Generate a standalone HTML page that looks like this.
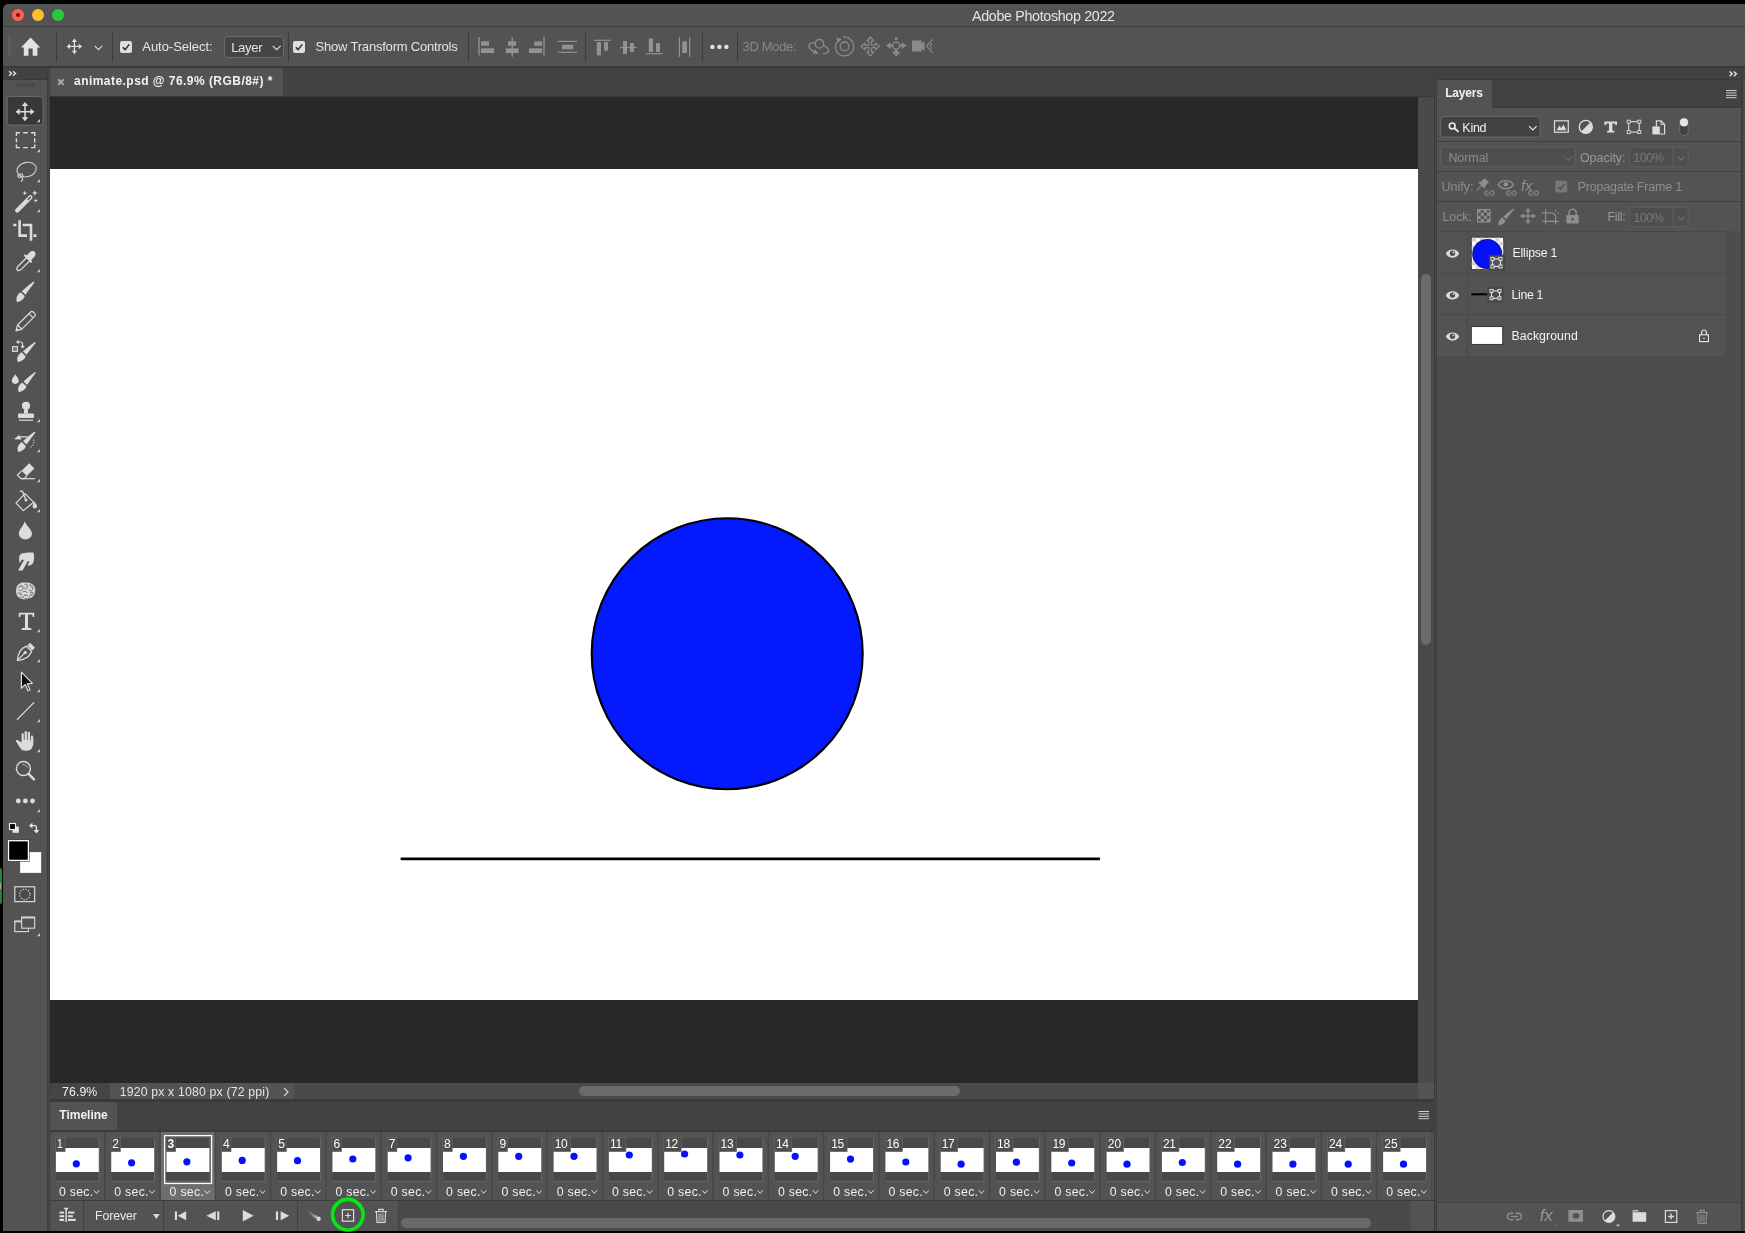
<!DOCTYPE html>
<html lang="en">
<head>
<meta charset="utf-8">
<title>Adobe Photoshop 2022</title>
<style>
*{box-sizing:border-box;margin:0;padding:0}
html,body{width:1745px;height:1233px;overflow:hidden;background:#000}
body{position:relative;font-family:"Liberation Sans",sans-serif;font-size:12px;color:#dcdcdc;-webkit-font-smoothing:antialiased}
.a{position:absolute}
.t{position:absolute;white-space:nowrap;line-height:1;transform-origin:0 0}
svg{position:absolute;overflow:visible}
#win{position:absolute;left:3px;top:4px;width:1742px;height:1227px;background:#535353;border-top-left-radius:5px;overflow:hidden}
</style>
</head>
<body>
<div id="win"></div>
<div id="ui" style="position:absolute;left:0;top:0;width:1745px;height:1233px;will-change:transform">
<!-- layout -->
<div class="a" style="left:3px;top:26px;width:1742px;height:1px;background:#3e3e3e;"></div>
<div class="a" style="left:3px;top:66.4px;width:1742px;height:1.5px;background:#3a3a3a;"></div>
<div class="a" style="left:3px;top:68px;width:44px;height:11px;background:#424242;"></div>
<div class="a" style="left:3px;top:79px;width:44px;height:1px;background:#3a3a3a;"></div>
<div class="a" style="left:47px;top:68px;width:3px;height:1163px;background:#3c3c3c;"></div>
<div class="a" style="left:48px;top:68px;width:1px;height:1163px;background:#484848;"></div>
<div class="a" style="left:50px;top:68px;width:1384px;height:28px;background:#424242;"></div>
<div class="a" style="left:50px;top:68px;width:233px;height:28px;background:#535353;"></div>
<div class="a" style="left:50px;top:96px;width:1384px;height:1px;background:#383838;"></div>
<div class="a" style="left:50px;top:97px;width:1368px;height:986px;background:#282828;"></div>
<div class="a" style="left:1418px;top:97px;width:16px;height:986px;background:#4a4a4a;"></div>
<div class="a" style="left:1421px;top:274px;width:10px;height:371px;background:#6b6b6b;border-radius:5px;"></div>
<div class="a" style="left:50px;top:1083px;width:1384px;height:16px;background:#4a4a4a;"></div>
<div class="a" style="left:50px;top:1083px;width:60px;height:16px;background:#454545;"></div>
<div class="a" style="left:110px;top:1083px;width:184px;height:16px;background:#535353;"></div>
<div class="a" style="left:579px;top:1086px;width:381px;height:10px;background:#6b6b6b;border-radius:5px;"></div>
<div class="a" style="left:1418px;top:1083px;width:16px;height:16px;background:#535353;"></div>
<div class="a" style="left:50px;top:1099px;width:1384px;height:3px;background:#3a3a3a;"></div>
<div class="a" style="left:1434px;top:68px;width:3px;height:1163px;background:#3c3c3c;"></div>
<div class="a" style="left:1435px;top:68px;width:1px;height:1163px;background:#484848;"></div>
<div class="a" style="left:1741px;top:68px;width:2px;height:1163px;background:#3c3c3c;"></div>
<div class="a" style="left:1743px;top:68px;width:2px;height:1163px;background:#4d4d4d;"></div>
<div class="a" style="left:1743px;top:68px;width:2px;height:12px;background:#424242;"></div>
<div class="a" style="left:0px;top:1231px;width:1745px;height:2px;background:#000;"></div>
<!-- topbar -->
<svg style="left:0px;top:0px" width="80" height="28" viewBox="0 0 80 28" ><circle cx="18" cy="15" r="6" fill="#fe5f58"/><circle cx="18" cy="15" r="2" fill="#7a0500"/><circle cx="38" cy="15" r="6" fill="#febc2e"/><circle cx="58" cy="15" r="6" fill="#28c840"/></svg>
<div class="t" style="left:972.00px;top:9.00px;font-size:14.3px;color:#e4e4e4;letter-spacing:-0.343px;">Adobe Photoshop 2022</div>
<svg style="left:0px;top:0px" width="14" height="60" viewBox="0 0 14 60" ><rect x="8" y="37" width="3" height="1" fill="#666"/><rect x="8" y="39" width="3" height="1" fill="#666"/><rect x="8" y="41" width="3" height="1" fill="#666"/><rect x="8" y="43" width="3" height="1" fill="#666"/><rect x="8" y="45" width="3" height="1" fill="#666"/><rect x="8" y="47" width="3" height="1" fill="#666"/><rect x="8" y="49" width="3" height="1" fill="#666"/><rect x="8" y="51" width="3" height="1" fill="#666"/><rect x="8" y="53" width="3" height="1" fill="#666"/><rect x="8" y="55" width="3" height="1" fill="#666"/></svg>
<svg style="left:20px;top:36px" width="22" height="22" viewBox="0 0 22 22" ><path d="M10.6 1.6 L20.2 11.6 H17.4 V19.8 H12.7 V12.6 H8.5 V19.8 H3.8 V11.6 H1 Z" fill="#e2e2e2"/></svg>
<div class="a" style="left:56px;top:32px;width:1px;height:30px;background:#3c3c3c;"></div>
<svg style="left:66px;top:38px" width="17" height="17" viewBox="0 0 17 17" ><g fill="none" stroke="#dcdcdc" stroke-width="1.3"><path d="M8.4 2 V14.8 M2 8.4 H14.8"/></g><path d="M8.4 0.6 L11 4 H5.8 Z M8.4 16.2 L11 12.8 H5.8 Z M0.6 8.4 L4 5.8 V11 Z M16.2 8.4 L12.8 5.8 V11 Z" fill="#dcdcdc"/></svg>
<svg style="left:94px;top:45px" width="9" height="6" viewBox="0 0 9 6" ><path d="M0.8 0.8 L4.5 4.6 L8.2 0.8" fill="none" stroke="#dcdcdc" stroke-width="1.2"/></svg>
<div class="a" style="left:112px;top:32px;width:1px;height:30px;background:#3c3c3c;"></div>
<svg style="left:120px;top:41px" width="12" height="12" viewBox="0 0 12 12" ><rect x="0" y="0" width="12" height="12" rx="2" fill="#dedede"/><path d="M2.8 6.2 L5.1 8.6 L9.3 3.4" fill="none" stroke="#2a2a2a" stroke-width="1.5"/></svg>
<div class="t" style="left:142.30px;top:40.00px;font-size:13px;color:#e4e4e4;letter-spacing:-0.044px;">Auto-Select:</div>
<div class="a" style="left:224px;top:36.2px;width:60px;height:21.6px;background:#454545;border:1px solid #6a6a6a;border-radius:3px;"></div>
<div class="t" style="left:231.20px;top:41.00px;font-size:13px;color:#e4e4e4;letter-spacing:-0.306px;">Layer</div>
<svg style="left:271.5px;top:44.5px" width="10" height="6" viewBox="0 0 10 6" ><path d="M0.8 0.8 L4.7 4.7 L8.6 0.8" fill="none" stroke="#dcdcdc" stroke-width="1.2"/></svg>
<div class="a" style="left:288px;top:32px;width:1px;height:30px;background:#3c3c3c;"></div>
<svg style="left:293px;top:41px" width="12" height="12" viewBox="0 0 12 12" ><rect x="0" y="0" width="12" height="12" rx="2" fill="#dedede"/><path d="M2.8 6.2 L5.1 8.6 L9.3 3.4" fill="none" stroke="#2a2a2a" stroke-width="1.5"/></svg>
<div class="t" style="left:315.60px;top:40.00px;font-size:13px;color:#e4e4e4;letter-spacing:-0.203px;">Show Transform Controls</div>
<div class="a" style="left:468px;top:32px;width:1px;height:30px;background:#3c3c3c;"></div>
<svg style="left:0;top:0" width="720" height="66" viewBox="0 0 720 66"><g fill="#929292"><rect x="478.3" y="37" width="1.4" height="18.4"/><rect x="481" y="41.3" width="8" height="4.5"/><rect x="481" y="48.3" width="13" height="4.7"/><rect x="511.5" y="37" width="1.4" height="19.8"/><rect x="508" y="41.3" width="8" height="4.5"/><rect x="505.8" y="48.3" width="12.8" height="4.7"/><rect x="543.3" y="37" width="1.4" height="18.4"/><rect x="534.2" y="41.3" width="7.8" height="4.5"/><rect x="529" y="48.3" width="13" height="4.7"/><rect x="558" y="40.8" width="19" height="1.2"/><rect x="558" y="51.7" width="19" height="1.2"/><rect x="561.9" y="44.7" width="11.3" height="4.6"/><rect x="594" y="39.7" width="17" height="1.2"/><rect x="596.8" y="42" width="4.2" height="13.4"/><rect x="604" y="42" width="4" height="8.6"/><rect x="620" y="46.9" width="16.9" height="1.2"/><rect x="623" y="41" width="4" height="13"/><rect x="630" y="43" width="4" height="9"/><rect x="646" y="53.1" width="16.8" height="1.2"/><rect x="648.8" y="38.5" width="4.2" height="13.5"/><rect x="656" y="43" width="4" height="9"/><rect x="678.8" y="37" width="1.2" height="19.8"/><rect x="689.1" y="37" width="1.2" height="19.8"/><rect x="682.2" y="41.3" width="4.8" height="11.7"/></g></svg>
<div class="a" style="left:585px;top:32px;width:1px;height:30px;background:#3c3c3c;"></div>
<div class="a" style="left:702px;top:32px;width:1px;height:30px;background:#3c3c3c;"></div>
<svg style="left:708px;top:42px" width="24" height="10" viewBox="0 0 24 10" fill="#e2e2e2"><circle cx="4.4" cy="4.9" r="2.2"/><circle cx="11.4" cy="4.9" r="2.2"/><circle cx="18.4" cy="4.9" r="2.2"/></svg>
<div class="a" style="left:737px;top:32px;width:1px;height:30px;background:#3c3c3c;"></div>
<div class="t" style="left:742.60px;top:40.00px;font-size:13px;color:#888;letter-spacing:-0.334px;">3D Mode:</div>
<svg style="left:807px;top:36px" width="24" height="22" viewBox="0 0 24 22" ><g fill="none" stroke="#8a8a8a" stroke-width="1.3"><circle cx="12.5" cy="7.8" r="4.3"/><path d="M8.3 7 C3 6 0.8 9 2.6 12 C4 14.4 6.5 15.6 9 16.2"/><path d="M16.6 9.6 C21 11 23 14.6 20.4 16.6 C19 17.7 17 17.8 15.6 17.6"/></g><path d="M5.6 17.6 L11.6 17.9 L8.4 13.4 Z" fill="#8a8a8a"/></svg>
<svg style="left:834px;top:35px" width="22" height="23" viewBox="0 0 22 23" ><g fill="none" stroke="#8a8a8a" stroke-width="1.3"><circle cx="10.6" cy="11.4" r="4.4"/><path d="M4.2 5.6 C-0.5 10.5 1.2 18 7.2 20.3 C13.5 22.6 20 17.5 19.6 11 C19.3 5.4 14.4 1.4 9 2"/></g><path d="M2.4 2.6 L7.6 4 L3.4 8.2 Z" fill="#8a8a8a"/></svg>
<svg style="left:860px;top:36px" width="21" height="21" viewBox="0 0 21 21" ><path d="M10.3 1 L13.8 5 H11.6 V9.2 H15.6 V7 L19.6 10.4 L15.6 13.9 V11.6 H11.6 V15.8 H13.8 L10.3 19.8 L6.8 15.8 H9 V11.6 H5 V13.9 L1 10.4 L5 7 V9.2 H9 V5 H6.8 Z" fill="none" stroke="#8a8a8a" stroke-width="1.2" stroke-linejoin="round"/></svg>
<svg style="left:885px;top:36px" width="23" height="22" viewBox="0 0 23 22" ><circle cx="11.2" cy="9.6" r="3.6" fill="none" stroke="#8a8a8a" stroke-width="1.3"/><circle cx="11.2" cy="2.4" r="1.5" fill="#8a8a8a"/><path d="M1 9.6 L5.6 6.2 V8.4 H7.2 V10.8 H5.6 V13 Z M21.4 9.6 L16.8 6.2 V8.4 H15.2 V10.8 H16.8 V13 Z M11.2 20.4 L6.8 15.8 H9.6 V13.8 H12.8 V15.8 H15.6 Z" fill="#8a8a8a"/></svg>
<svg style="left:911px;top:38px" width="24" height="17" viewBox="0 0 24 17" ><path d="M1 2.6 H10.6 V5.4 L13.6 3.2 V13 L10.6 10.8 V13.6 H1 Z" fill="#8a8a8a"/><path d="M21.6 1.4 L15.6 8.1 L21.6 14.8" fill="none" stroke="#8a8a8a" stroke-width="1.2"/><path d="M20.8 5.4 C19.4 7 19.4 9.2 20.8 10.8" fill="none" stroke="#8a8a8a" stroke-width="1.1"/></svg>
<!-- tools -->
<svg style="left:0;top:0" width="50" height="960" viewBox="0 0 50 960"><path d="M9 71.2 L11.6 73.5 L9 75.8 M13 71.2 L15.6 73.5 L13 75.8" fill="none" stroke="#e8e8e8" stroke-width="1.3"/><rect x="16" y="83.2" width="1" height="3.6" fill="#414141"/><rect x="18" y="83.2" width="1" height="3.6" fill="#414141"/><rect x="20" y="83.2" width="1" height="3.6" fill="#414141"/><rect x="22" y="83.2" width="1" height="3.6" fill="#414141"/><rect x="24" y="83.2" width="1" height="3.6" fill="#414141"/><rect x="26" y="83.2" width="1" height="3.6" fill="#414141"/><rect x="28" y="83.2" width="1" height="3.6" fill="#414141"/><rect x="30" y="83.2" width="1" height="3.6" fill="#414141"/><rect x="32" y="83.2" width="1" height="3.6" fill="#414141"/><rect x="34" y="83.2" width="1" height="3.6" fill="#414141"/><rect x="7.2" y="96.5" width="35.8" height="28.6" rx="3" fill="#383838" stroke="#6a6a6a" stroke-width="1"/><path d="M25 104.2 V119.2 M17.4 111.7 H32.6" stroke="#dcdcdc" stroke-width="1.5" fill="none"/><path d="M25 102 L28.3 106 H21.7 Z M25 121.3 L28.3 117.3 H21.7 Z M15.6 111.7 L19.6 108.4 V115 Z M34.4 111.7 L30.4 108.4 V115 Z" fill="#dcdcdc"/><path d="M40 119.0 V122.2 H36.8 Z" fill="#c8c8c8"/><path d="M16.4 136 V132.8 H20 M23.2 132.8 H27.8 M31 132.8 H34.7 V136 M34.7 138.3 V142.4 M34.7 144.4 V147.6 H31 M27.8 147.6 H23.2 M20 147.6 H16.4 V144.4 M16.4 142.4 V138.3" fill="none" stroke="#dcdcdc" stroke-width="1.4"/><path d="M40 149.0 V152.2 H36.8 Z" fill="#c8c8c8"/><g fill="none" stroke="#d2d2d2" stroke-width="1.1"><ellipse cx="26.6" cy="169.6" rx="9.8" ry="7.2" transform="rotate(-14 26.6 169.6)"/><ellipse cx="20.3" cy="175.6" rx="2.6" ry="1.6" transform="rotate(-14 20.3 175.6)"/><path d="M21.8 176.8 C23 178.6 22.6 180.6 21 181.8"/></g><path d="M40 179.0 V182.2 H36.8 Z" fill="#c8c8c8"/><path d="M17.2 210.4 L30.4 197.2" stroke="#dcdcdc" stroke-width="4.2" stroke-linecap="round" fill="none"/><path d="M28.2 199.5 L30.3 197.4" stroke="#535353" stroke-width="1.5" stroke-linecap="round"/><path d="M24.8 190.6 L25.5 192.4 L27.4 193.1 L25.5 193.8 L24.8 195.6 L24.1 193.8 L22.2 193.1 L24.1 192.4 Z" fill="#dcdcdc"/><path d="M34.8 190 L35.6 192.2 L37.8 193 L35.6 193.8 L34.8 196 L34 193.8 L31.8 193 L34 192.2 Z" fill="#dcdcdc"/><path d="M35.8 198.4 L36.4 200 L38 200.6 L36.4 201.2 L35.8 202.8 L35.2 201.2 L33.6 200.6 L35.2 200 Z" fill="#dcdcdc"/><path d="M40 209.0 V212.2 H36.8 Z" fill="#c8c8c8"/><path d="M13.2 225 H16.4 M19.6 220.2 V235.6 H27 M22.6 225 H31 V240.8 M33.4 235.6 H36.4" fill="none" stroke="#dcdcdc" stroke-width="2.6"/><path d="M27 257.2 L18 266.2 C16.6 267.6 16.6 269.2 17.4 270 C18.2 270.8 19.8 270.8 21.2 269.4 L30.2 260.4" fill="none" stroke="#dcdcdc" stroke-width="1.3"/><path d="M23.6 255.6 L25 254.2 L26.4 255.6 L29.6 252.4 C31 251 33.6 250.6 34.8 251.8 C36 253 35.6 255.6 34.2 257 L31 260.2 L32.4 261.6 L31 263 Z" fill="#dcdcdc"/><path d="M40 269.0 V272.2 H36.8 Z" fill="#c8c8c8"/><path d="M17.12 302.22 C15.34 298.41 16.85 295.19 20.56 292.25 L24.65 296.07 C24.61 298.17 21.26 301.45 17.12 302.22 Z" fill="#dcdcdc"/><path d="M21.85 291.31 Q28.16 285.45 33.56 281.59 L34.44 282.41 Q29.89 288.14 25.50 294.73 Z" fill="#dcdcdc"/><g fill="none" stroke="#dcdcdc" stroke-width="1.2" stroke-linejoin="round"><path d="M16 330.8 L17.6 325 L30.6 312 C31.4 311.2 32.4 311.2 33.2 312 L34.8 313.6 C35.6 314.4 35.6 315.4 34.8 316.2 L21.8 329.2 Z"/><path d="M17.6 325 L21.8 329.2 M29 313.6 L33.2 317.8"/></g><path d="M16 330.8 L16.7 328 L18.8 330.1 Z" fill="#dcdcdc"/><rect x="12.6" y="346.6" width="4.8" height="4.8" fill="#777" stroke="#dcdcdc" stroke-width="1.1"/><path d="M18 342 H20.6 C22 342 22.6 342.8 22.6 344 V346.4" fill="none" stroke="#dcdcdc" stroke-width="1.2"/><path d="M16 342 L18.6 339.8 V344.2 Z M22.6 348.6 L20.4 346 H24.8 Z" fill="#dcdcdc"/><path d="M17.88 362.04 C16.22 358.18 17.84 355.01 21.64 352.20 L25.60 356.16 C25.49 358.25 22.04 361.42 17.88 362.04 Z" fill="#dcdcdc"/><path d="M22.96 351.30 Q29.46 345.66 34.98 341.98 L35.82 342.82 Q31.10 348.40 26.50 354.84 Z" fill="#dcdcdc"/><path d="M15.2 374 C16.2 376.4 18.8 378.4 18.8 380.6 A3.5 3.3 0 0 1 11.8 380.6 C11.8 378.4 14.4 376.4 15.2 374 Z" fill="#dcdcdc"/><path d="M18.92 392.21 C17.12 388.43 18.58 385.26 22.22 382.39 L26.31 386.22 C26.29 388.29 23.01 391.50 18.92 392.21 Z" fill="#dcdcdc"/><path d="M23.48 381.48 Q29.66 375.75 34.96 371.99 L35.84 372.81 Q31.40 378.43 27.13 384.90 Z" fill="#dcdcdc"/><circle cx="26" cy="405.8" r="4.1" fill="#dcdcdc"/><path d="M24.4 408 H27.6 L28.2 413.6 H23.8 Z" fill="#dcdcdc"/><rect x="18" y="413.6" width="16" height="4.4" rx="0.8" fill="#dcdcdc"/><rect x="19" y="419.6" width="14" height="1.2" fill="#dcdcdc"/><path d="M40 419.0 V422.2 H36.8 Z" fill="#c8c8c8"/><path d="M14 439.2 L19.4 434.8 V436.2 H27.6 V437.6 H20.6 L21.4 439.6 Z" fill="#dcdcdc"/><path d="M18.32 452.01 C16.53 448.22 18.01 445.02 21.69 442.12 L25.78 445.95 C25.75 448.03 22.43 451.28 18.32 452.01 Z" fill="#dcdcdc"/><path d="M22.97 441.20 Q29.21 435.40 34.56 431.59 L35.44 432.41 Q30.95 438.08 26.62 444.61 Z" fill="#dcdcdc"/><path d="M33.6 439.6 C34.6 443 32.8 446.4 29.4 447.8" fill="none" stroke="#dcdcdc" stroke-width="1.1" stroke-dasharray="1.1 1.4"/><path d="M40 449.0 V452.2 H36.8 Z" fill="#c8c8c8"/><path d="M29.2 463.2 L34.4 468.4 L26.8 476 L21.6 470.8 Z" fill="#dcdcdc"/><path d="M21.6 470.8 L17.4 475 L21 478.6 H24.2 L26.8 476" fill="none" stroke="#dcdcdc" stroke-width="1.2" stroke-linejoin="round"/><path d="M21 478.7 H35" stroke="#dcdcdc" stroke-width="1.2"/><path d="M40 479.0 V482.2 H36.8 Z" fill="#c8c8c8"/><path d="M25 493.6 L33.6 502.2 L23.4 510.6 L16 503.2 Z" fill="none" stroke="#dcdcdc" stroke-width="1.2" stroke-linejoin="round"/><path d="M20 491.4 C21.4 490.2 22.6 491.4 23.2 493 L25.6 499.6" fill="none" stroke="#dcdcdc" stroke-width="1.3"/><circle cx="26" cy="500" r="1.5" fill="#dcdcdc"/><path d="M34.4 501.4 C35.4 503.4 37 504.6 37 506.2 A2.2 2.2 0 0 1 32.6 506.2 C32.6 504.6 33.8 503.4 34.4 501.4 Z" fill="#dcdcdc"/><path d="M40 509.00000000000006 V512.2 H36.8 Z" fill="#c8c8c8"/><path d="M24.8 521.2 C26.6 526 32 529.6 32 533.6 A6.6 6 0 0 1 18.8 533.6 C18.8 529.6 23.4 526 24.8 521.2 Z" fill="#dcdcdc"/><path d="M19.4 556 C20 553.6 24 552.4 33.4 552.6 C34.4 555.6 34.4 560.6 33 563 C31.6 565.4 29 566 27.6 565.6 L29.4 561.6 L27.8 561 L22.6 570.6 H18 L24 560 L22 559.4 L19.6 563 C19 561 19 558 19.4 556 Z" fill="#dcdcdc"/><path d="M16.2 589 C16.6 585 20 582.4 24 582.6 C27 582 31 582.6 33.4 585 C35.8 587.4 35.6 592 34.4 594.6 C33 597.6 30 599 26.6 599.2 C22.6 599.6 18.6 598.4 17 595.4 C16 593.4 16 591 16.2 589 Z" fill="#d8d8d8"/><g fill="none" stroke="#555" stroke-width="0.75"><path d="M18 588.4 C19.6 585 23.4 584.8 23.2 588 C23 590.4 20 591.2 18.6 590"/><path d="M24.4 584.4 C27 583.4 28.4 585.6 27 588 C26 589.4 24.6 589 24.6 587.6"/><path d="M29 584.8 C32 584.6 34 587.4 32.2 590 C31 591.6 29 591 29 589.4"/><path d="M17.6 593.4 C19.6 592 22 593.4 21.4 595.8 M22.8 597.8 C23.6 594.6 26.6 594 27.8 596.2 M22.4 592 C24.4 590.8 27 591.4 27.6 593.2"/><path d="M29.4 597.2 C29.2 594.6 31.8 593.4 33.6 594.6 M24.6 598.6 C26.6 598.2 28.4 598.2 30 598.6 M19.4 596.6 C20.4 597.6 21.4 598 22.4 598 M30 592.6 C31.4 592 32.8 592.2 33.8 593"/><path d="M20 586.6 C20.6 586 21.4 586 21.8 586.6 M25.6 585.8 C26 585.4 26.6 585.6 26.6 586.2 M30.2 586.6 C30.8 586.2 31.6 586.6 31.4 587.4 M19.4 594.4 C19.8 594 20.4 594.2 20.4 594.8 M25 595.6 C25.4 595.2 26 595.4 26 596 M31.2 595.6 C31.6 595.2 32.2 595.4 32.2 596"/></g><path d="M18.8 612.8 H34.2 V617 H32.8 L32.2 614.6 H28 V627.8 L31.4 628.2 V629.9 H21.6 V628.2 L25 627.8 V614.6 H20.8 L20.2 617 H18.8 Z" fill="#dcdcdc"/><path d="M40 629.0 V632.2 H36.8 Z" fill="#c8c8c8"/><path d="M17.4 660.4 C17.8 654.4 20 648.8 26.4 646.2 L31.6 651.4 C29 657.8 23.4 660 17.4 660.4 Z" fill="none" stroke="#dcdcdc" stroke-width="1.3" stroke-linejoin="round"/><path d="M17.8 660 L24.6 653.2" stroke="#dcdcdc" stroke-width="1.1"/><circle cx="25.2" cy="652.6" r="1.7" fill="#dcdcdc"/><path d="M27.4 645.6 L30 642.8 L35 647.8 L32.2 650.6 Z" fill="#dcdcdc"/><path d="M40 659.0 V662.2 H36.8 Z" fill="#c8c8c8"/><path d="M21.4 672.2 V688.2 L25.2 684.6 L28 690.8 L30 689.9 L27.2 683.8 L32.4 683.4 Z" fill="#111" stroke="#dcdcdc" stroke-width="1.2" stroke-linejoin="round"/><path d="M40 689.0 V692.2 H36.8 Z" fill="#c8c8c8"/><path d="M17.4 719.4 L33.8 702.6" stroke="#dcdcdc" stroke-width="1.3" stroke-linecap="round"/><path d="M40 719.0 V722.2 H36.8 Z" fill="#c8c8c8"/><path d="M21.6 742.6 V734.4 C21.6 732.8 23.8 732.8 23.8 734.4 V740 H24.6 V732.2 C24.6 730.6 26.9 730.6 26.9 732.2 V740 H27.7 V733 C27.7 731.4 30 731.4 30 733 V740.6 H30.8 V736.6 C30.8 735 33 735 33 736.6 L33.2 737.6 C33.6 742.6 33.6 746 31.4 749 C30 751 22.6 751.4 21.4 749.6 C19 746 17 743 16 741.6 C15.4 740.2 17.2 739.4 18.2 740.4 Z" fill="#dcdcdc"/><path d="M40 749.0 V752.2 H36.8 Z" fill="#c8c8c8"/><circle cx="23.4" cy="768.5" r="7" fill="none" stroke="#dcdcdc" stroke-width="1.4"/><path d="M22.4 764.6 C24.8 764.4 26.8 765.6 27.4 767.6" fill="none" stroke="#bbb" stroke-width="0.9"/><path d="M28.6 773.8 L34 779.4" stroke="#dcdcdc" stroke-width="2.4" stroke-linecap="round"/><circle cx="18.3" cy="801" r="2.4" fill="#dcdcdc"/><circle cx="25.4" cy="801" r="2.4" fill="#dcdcdc"/><circle cx="32.5" cy="801" r="2.4" fill="#dcdcdc"/><path d="M40 809.0 V812.2 H36.8 Z" fill="#c8c8c8"/><rect x="12.6" y="826.6" width="6.2" height="6.2" fill="#e6e6e6"/><rect x="9.5" y="823.5" width="6" height="6" fill="#0a0a0a" stroke="#f0f0f0" stroke-width="1.1"/><path d="M31 825.6 H35 C36 825.6 36.4 826 36.4 827 V830.4" fill="none" stroke="#e6e6e6" stroke-width="1.3"/><path d="M29 825.6 L32.4 822.8 V828.4 Z M36.4 833.4 L33.6 830 H39.2 Z" fill="#e6e6e6"/><rect x="19.8" y="851.8" width="21.8" height="21.4" fill="#fff" stroke="#3a3a3a" stroke-width="0.6"/><rect x="7.3" y="839.5" width="22.3" height="22.1" fill="#3a3a3a"/><rect x="8.5" y="840.7" width="19.9" height="19.7" fill="#000" stroke="#fff" stroke-width="1.3"/><rect x="14.8" y="886.8" width="19.8" height="14.8" fill="#4a4a4a" stroke="#d0d0d0" stroke-width="1.3"/><circle cx="24.8" cy="894.4" r="5.2" fill="none" stroke="#e0e0e0" stroke-width="1.1" stroke-dasharray="1.3 1.42"/><rect x="14.8" y="921.6" width="13.6" height="10" fill="#535353" stroke="#d0d0d0" stroke-width="1.2"/><rect x="14.2" y="920.4" width="14.8" height="1.8" fill="#d0d0d0"/><rect x="21.6" y="917.6" width="13" height="10.6" fill="#535353" stroke="#d0d0d0" stroke-width="1.2"/><rect x="21" y="916.4" width="14.2" height="2" fill="#d0d0d0"/><path d="M40 933.0 V936.2 H36.8 Z" fill="#c8c8c8"/></svg>
<div class="a" style="left:0px;top:868px;width:2px;height:36px;background:#2b8238;border-radius:0 2px 2px 0;"></div>
<div class="a" style="left:0px;top:883px;width:1px;height:6px;background:#a8a8a8;"></div>
<!-- canvas -->
<div class="a" style="left:50px;top:169px;width:1368px;height:831px;background:#fff;"></div>
<svg class="a" style="left:50px;top:169px" width="1368" height="831" viewBox="50 169 1368 831"><circle cx="727.2" cy="653.7" r="135.5" fill="#0419fd" stroke="#000" stroke-width="2.1"/><rect x="400.6" y="857.4" width="699.4" height="2.9" rx="0.8" fill="#000"/></svg>
<svg style="left:57px;top:78px" width="8" height="8" viewBox="0 0 8 8"><path d="M1.2 1.4 L6.6 6.8 M6.6 1.4 L1.2 6.8" stroke="#b4b4b4" stroke-width="1.7"/></svg>
<div class="t" style="left:74.00px;top:75.00px;font-size:12px;font-weight:700;color:#f2f2f2;letter-spacing:0.457px;">animate.psd @ 76.9% (RGB/8#) *</div>
<div class="t" style="left:62.00px;top:1086.00px;font-size:12.3px;color:#f0f0f0;letter-spacing:0.105px;">76.9%</div>
<div class="t" style="left:119.70px;top:1086.00px;font-size:12.3px;color:#e4e4e4;letter-spacing:0.157px;">1920 px x 1080 px (72 ppi)</div>
<svg style="left:282px;top:1086px" width="8" height="12" viewBox="0 0 8 12"><path d="M2 1.8 L6 6 L2 10.2" fill="none" stroke="#dcdcdc" stroke-width="1.1"/></svg>
<!-- timeline -->
<div class="a" style="left:50px;top:1102px;width:1384px;height:28px;background:#424242;"></div>
<div class="a" style="left:50px;top:1102px;width:67px;height:28px;background:#535353;"></div>
<div class="a" style="left:50px;top:1130px;width:1384px;height:1.5px;background:#3c3c3c;"></div>
<div class="t" style="left:59.30px;top:1109.00px;font-size:12px;font-weight:700;color:#f0f0f0;letter-spacing:-0.009px;">Timeline</div>
<svg style="left:1418px;top:1110px" width="12" height="10" viewBox="0 0 12 10"><path d="M0.6 1.5 H11 M0.6 3.9 H11 M0.6 6.3 H11 M0.6 8.7 H11" stroke="#d0d0d0" stroke-width="1"/></svg>
<div class="a" style="left:50px;top:1131.5px;width:1384px;height:68.5px;background:#535353;"></div>
<div class="a" style="left:161px;top:1132px;width:54.2px;height:68px;background:#6e6e6e;"></div>
<svg style="left:0;top:0" width="1440" height="1233" viewBox="0 0 1440 1233"><rect x="104.0" y="1132" width="1.4" height="68" fill="#474747"/><rect x="55.2" y="1137.3" width="44.3" height="44.2" fill="#484848"/><path d="M99.2 1137.6 V1181.3 H55.6" fill="none" stroke="#6c6c6c" stroke-width="0.9"/><path d="M55.5 1181 V1137.6 H98.9" fill="none" stroke="#5c5c5c" stroke-width="0.6"/><rect x="55.9" y="1148" width="42.9" height="24" fill="#fff"/><rect x="55.5" y="1137.6" width="9.6" height="14" fill="#4e4e4e" stroke="#666" stroke-width="0.7"/><circle cx="76.3" cy="1163.8" r="3.6" fill="#0710fb"/><path d="M93.9 1190.3 L96.6 1193.4 L99.3 1190.3" fill="none" stroke="#e0e0e0" stroke-width="1"/><rect x="159.3" y="1132" width="1.4" height="68" fill="#474747"/><rect x="110.5" y="1137.3" width="44.3" height="44.2" fill="#484848"/><path d="M154.5 1137.6 V1181.3 H110.9" fill="none" stroke="#6c6c6c" stroke-width="0.9"/><path d="M110.8 1181 V1137.6 H154.2" fill="none" stroke="#5c5c5c" stroke-width="0.6"/><rect x="111.2" y="1148" width="42.9" height="24" fill="#fff"/><rect x="110.8" y="1137.6" width="9.6" height="14" fill="#4e4e4e" stroke="#666" stroke-width="0.7"/><circle cx="131.6" cy="1162.8" r="3.6" fill="#0710fb"/><path d="M149.2 1190.3 L151.9 1193.4 L154.6 1190.3" fill="none" stroke="#e0e0e0" stroke-width="1"/><rect x="214.6" y="1132" width="1.4" height="68" fill="#474747"/><rect x="165.8" y="1137.3" width="44.3" height="44.2" fill="#484848"/><path d="M209.8 1137.6 V1181.3 H166.2" fill="none" stroke="#6c6c6c" stroke-width="0.9"/><path d="M166.1 1181 V1137.6 H209.5" fill="none" stroke="#5c5c5c" stroke-width="0.6"/><rect x="166.5" y="1148" width="42.9" height="24" fill="#fff"/><rect x="166.1" y="1137.6" width="9.6" height="14" fill="#4e4e4e" stroke="#666" stroke-width="0.7"/><circle cx="186.9" cy="1161.8" r="3.6" fill="#0710fb"/><path d="M204.5 1190.3 L207.2 1193.4 L209.9 1190.3" fill="none" stroke="#e0e0e0" stroke-width="1"/><rect x="269.9" y="1132" width="1.4" height="68" fill="#474747"/><rect x="221.1" y="1137.3" width="44.3" height="44.2" fill="#484848"/><path d="M265.1 1137.6 V1181.3 H221.5" fill="none" stroke="#6c6c6c" stroke-width="0.9"/><path d="M221.4 1181 V1137.6 H264.8" fill="none" stroke="#5c5c5c" stroke-width="0.6"/><rect x="221.8" y="1148" width="42.9" height="24" fill="#fff"/><rect x="221.4" y="1137.6" width="9.6" height="14" fill="#4e4e4e" stroke="#666" stroke-width="0.7"/><circle cx="242.2" cy="1160.4" r="3.6" fill="#0710fb"/><path d="M259.8 1190.3 L262.5 1193.4 L265.2 1190.3" fill="none" stroke="#e0e0e0" stroke-width="1"/><rect x="325.2" y="1132" width="1.4" height="68" fill="#474747"/><rect x="276.4" y="1137.3" width="44.3" height="44.2" fill="#484848"/><path d="M320.4 1137.6 V1181.3 H276.8" fill="none" stroke="#6c6c6c" stroke-width="0.9"/><path d="M276.7 1181 V1137.6 H320.1" fill="none" stroke="#5c5c5c" stroke-width="0.6"/><rect x="277.1" y="1148" width="42.9" height="24" fill="#fff"/><rect x="276.7" y="1137.6" width="9.6" height="14" fill="#4e4e4e" stroke="#666" stroke-width="0.7"/><circle cx="297.5" cy="1160.7" r="3.6" fill="#0710fb"/><path d="M315.1 1190.3 L317.8 1193.4 L320.5 1190.3" fill="none" stroke="#e0e0e0" stroke-width="1"/><rect x="380.5" y="1132" width="1.4" height="68" fill="#474747"/><rect x="331.7" y="1137.3" width="44.3" height="44.2" fill="#484848"/><path d="M375.7 1137.6 V1181.3 H332.1" fill="none" stroke="#6c6c6c" stroke-width="0.9"/><path d="M332.0 1181 V1137.6 H375.4" fill="none" stroke="#5c5c5c" stroke-width="0.6"/><rect x="332.4" y="1148" width="42.9" height="24" fill="#fff"/><rect x="332.0" y="1137.6" width="9.6" height="14" fill="#4e4e4e" stroke="#666" stroke-width="0.7"/><circle cx="352.8" cy="1159" r="3.6" fill="#0710fb"/><path d="M370.4 1190.3 L373.1 1193.4 L375.8 1190.3" fill="none" stroke="#e0e0e0" stroke-width="1"/><rect x="435.8" y="1132" width="1.4" height="68" fill="#474747"/><rect x="387.0" y="1137.3" width="44.3" height="44.2" fill="#484848"/><path d="M431.0 1137.6 V1181.3 H387.4" fill="none" stroke="#6c6c6c" stroke-width="0.9"/><path d="M387.3 1181 V1137.6 H430.7" fill="none" stroke="#5c5c5c" stroke-width="0.6"/><rect x="387.7" y="1148" width="42.9" height="24" fill="#fff"/><rect x="387.3" y="1137.6" width="9.6" height="14" fill="#4e4e4e" stroke="#666" stroke-width="0.7"/><circle cx="408.1" cy="1157.8" r="3.6" fill="#0710fb"/><path d="M425.7 1190.3 L428.4 1193.4 L431.1 1190.3" fill="none" stroke="#e0e0e0" stroke-width="1"/><rect x="491.1" y="1132" width="1.4" height="68" fill="#474747"/><rect x="442.3" y="1137.3" width="44.3" height="44.2" fill="#484848"/><path d="M486.3 1137.6 V1181.3 H442.7" fill="none" stroke="#6c6c6c" stroke-width="0.9"/><path d="M442.6 1181 V1137.6 H486.0" fill="none" stroke="#5c5c5c" stroke-width="0.6"/><rect x="443.0" y="1148" width="42.9" height="24" fill="#fff"/><rect x="442.6" y="1137.6" width="9.6" height="14" fill="#4e4e4e" stroke="#666" stroke-width="0.7"/><circle cx="463.4" cy="1156.3" r="3.6" fill="#0710fb"/><path d="M481.0 1190.3 L483.7 1193.4 L486.4 1190.3" fill="none" stroke="#e0e0e0" stroke-width="1"/><rect x="546.4" y="1132" width="1.4" height="68" fill="#474747"/><rect x="497.6" y="1137.3" width="44.3" height="44.2" fill="#484848"/><path d="M541.6 1137.6 V1181.3 H498.0" fill="none" stroke="#6c6c6c" stroke-width="0.9"/><path d="M497.9 1181 V1137.6 H541.3" fill="none" stroke="#5c5c5c" stroke-width="0.6"/><rect x="498.3" y="1148" width="42.9" height="24" fill="#fff"/><rect x="497.9" y="1137.6" width="9.6" height="14" fill="#4e4e4e" stroke="#666" stroke-width="0.7"/><circle cx="518.7" cy="1156.3" r="3.6" fill="#0710fb"/><path d="M536.3 1190.3 L539.0 1193.4 L541.7 1190.3" fill="none" stroke="#e0e0e0" stroke-width="1"/><rect x="601.7" y="1132" width="1.4" height="68" fill="#474747"/><rect x="552.9" y="1137.3" width="44.3" height="44.2" fill="#484848"/><path d="M596.9 1137.6 V1181.3 H553.3" fill="none" stroke="#6c6c6c" stroke-width="0.9"/><path d="M553.2 1181 V1137.6 H596.6" fill="none" stroke="#5c5c5c" stroke-width="0.6"/><rect x="553.6" y="1148" width="42.9" height="24" fill="#fff"/><rect x="553.2" y="1137.6" width="17.4" height="14" fill="#4e4e4e" stroke="#666" stroke-width="0.7"/><circle cx="574.0" cy="1156.3" r="3.6" fill="#0710fb"/><path d="M591.6 1190.3 L594.3 1193.4 L597.0 1190.3" fill="none" stroke="#e0e0e0" stroke-width="1"/><rect x="657.0" y="1132" width="1.4" height="68" fill="#474747"/><rect x="608.2" y="1137.3" width="44.3" height="44.2" fill="#484848"/><path d="M652.2 1137.6 V1181.3 H608.6" fill="none" stroke="#6c6c6c" stroke-width="0.9"/><path d="M608.5 1181 V1137.6 H651.9" fill="none" stroke="#5c5c5c" stroke-width="0.6"/><rect x="608.9" y="1148" width="42.9" height="24" fill="#fff"/><rect x="608.5" y="1137.6" width="17.4" height="14" fill="#4e4e4e" stroke="#666" stroke-width="0.7"/><circle cx="629.3" cy="1155" r="3.6" fill="#0710fb"/><path d="M646.9 1190.3 L649.6 1193.4 L652.3 1190.3" fill="none" stroke="#e0e0e0" stroke-width="1"/><rect x="712.3" y="1132" width="1.4" height="68" fill="#474747"/><rect x="663.5" y="1137.3" width="44.3" height="44.2" fill="#484848"/><path d="M707.5 1137.6 V1181.3 H663.9" fill="none" stroke="#6c6c6c" stroke-width="0.9"/><path d="M663.8 1181 V1137.6 H707.2" fill="none" stroke="#5c5c5c" stroke-width="0.6"/><rect x="664.2" y="1148" width="42.9" height="24" fill="#fff"/><rect x="663.8" y="1137.6" width="17.4" height="14" fill="#4e4e4e" stroke="#666" stroke-width="0.7"/><circle cx="684.6" cy="1154" r="3.6" fill="#0710fb"/><path d="M702.2 1190.3 L704.9 1193.4 L707.6 1190.3" fill="none" stroke="#e0e0e0" stroke-width="1"/><rect x="767.6" y="1132" width="1.4" height="68" fill="#474747"/><rect x="718.8" y="1137.3" width="44.3" height="44.2" fill="#484848"/><path d="M762.8 1137.6 V1181.3 H719.2" fill="none" stroke="#6c6c6c" stroke-width="0.9"/><path d="M719.1 1181 V1137.6 H762.5" fill="none" stroke="#5c5c5c" stroke-width="0.6"/><rect x="719.5" y="1148" width="42.9" height="24" fill="#fff"/><rect x="719.1" y="1137.6" width="17.4" height="14" fill="#4e4e4e" stroke="#666" stroke-width="0.7"/><circle cx="739.9" cy="1155" r="3.6" fill="#0710fb"/><path d="M757.5 1190.3 L760.2 1193.4 L762.9 1190.3" fill="none" stroke="#e0e0e0" stroke-width="1"/><rect x="822.9" y="1132" width="1.4" height="68" fill="#474747"/><rect x="774.1" y="1137.3" width="44.3" height="44.2" fill="#484848"/><path d="M818.1 1137.6 V1181.3 H774.5" fill="none" stroke="#6c6c6c" stroke-width="0.9"/><path d="M774.4 1181 V1137.6 H817.8" fill="none" stroke="#5c5c5c" stroke-width="0.6"/><rect x="774.8" y="1148" width="42.9" height="24" fill="#fff"/><rect x="774.4" y="1137.6" width="17.4" height="14" fill="#4e4e4e" stroke="#666" stroke-width="0.7"/><circle cx="795.2" cy="1156.3" r="3.6" fill="#0710fb"/><path d="M812.8 1190.3 L815.5 1193.4 L818.2 1190.3" fill="none" stroke="#e0e0e0" stroke-width="1"/><rect x="878.2" y="1132" width="1.4" height="68" fill="#474747"/><rect x="829.4" y="1137.3" width="44.3" height="44.2" fill="#484848"/><path d="M873.4 1137.6 V1181.3 H829.8" fill="none" stroke="#6c6c6c" stroke-width="0.9"/><path d="M829.7 1181 V1137.6 H873.1" fill="none" stroke="#5c5c5c" stroke-width="0.6"/><rect x="830.1" y="1148" width="42.9" height="24" fill="#fff"/><rect x="829.7" y="1137.6" width="17.4" height="14" fill="#4e4e4e" stroke="#666" stroke-width="0.7"/><circle cx="850.5" cy="1159.1" r="3.6" fill="#0710fb"/><path d="M868.1 1190.3 L870.8 1193.4 L873.5 1190.3" fill="none" stroke="#e0e0e0" stroke-width="1"/><rect x="933.5" y="1132" width="1.4" height="68" fill="#474747"/><rect x="884.7" y="1137.3" width="44.3" height="44.2" fill="#484848"/><path d="M928.7 1137.6 V1181.3 H885.1" fill="none" stroke="#6c6c6c" stroke-width="0.9"/><path d="M885.0 1181 V1137.6 H928.4" fill="none" stroke="#5c5c5c" stroke-width="0.6"/><rect x="885.4" y="1148" width="42.9" height="24" fill="#fff"/><rect x="885.0" y="1137.6" width="17.4" height="14" fill="#4e4e4e" stroke="#666" stroke-width="0.7"/><circle cx="905.8" cy="1162" r="3.6" fill="#0710fb"/><path d="M923.4 1190.3 L926.1 1193.4 L928.8 1190.3" fill="none" stroke="#e0e0e0" stroke-width="1"/><rect x="988.8" y="1132" width="1.4" height="68" fill="#474747"/><rect x="940.0" y="1137.3" width="44.3" height="44.2" fill="#484848"/><path d="M984.0 1137.6 V1181.3 H940.4" fill="none" stroke="#6c6c6c" stroke-width="0.9"/><path d="M940.3 1181 V1137.6 H983.7" fill="none" stroke="#5c5c5c" stroke-width="0.6"/><rect x="940.7" y="1148" width="42.9" height="24" fill="#fff"/><rect x="940.3" y="1137.6" width="17.4" height="14" fill="#4e4e4e" stroke="#666" stroke-width="0.7"/><circle cx="961.1" cy="1164.2" r="3.6" fill="#0710fb"/><path d="M978.7 1190.3 L981.4 1193.4 L984.1 1190.3" fill="none" stroke="#e0e0e0" stroke-width="1"/><rect x="1044.1" y="1132" width="1.4" height="68" fill="#474747"/><rect x="995.3" y="1137.3" width="44.3" height="44.2" fill="#484848"/><path d="M1039.3 1137.6 V1181.3 H995.7" fill="none" stroke="#6c6c6c" stroke-width="0.9"/><path d="M995.6 1181 V1137.6 H1039.0" fill="none" stroke="#5c5c5c" stroke-width="0.6"/><rect x="996.0" y="1148" width="42.9" height="24" fill="#fff"/><rect x="995.6" y="1137.6" width="17.4" height="14" fill="#4e4e4e" stroke="#666" stroke-width="0.7"/><circle cx="1016.4" cy="1162.2" r="3.6" fill="#0710fb"/><path d="M1034.0 1190.3 L1036.7 1193.4 L1039.4 1190.3" fill="none" stroke="#e0e0e0" stroke-width="1"/><rect x="1099.4" y="1132" width="1.4" height="68" fill="#474747"/><rect x="1050.6" y="1137.3" width="44.3" height="44.2" fill="#484848"/><path d="M1094.6 1137.6 V1181.3 H1051.0" fill="none" stroke="#6c6c6c" stroke-width="0.9"/><path d="M1050.9 1181 V1137.6 H1094.3" fill="none" stroke="#5c5c5c" stroke-width="0.6"/><rect x="1051.3" y="1148" width="42.9" height="24" fill="#fff"/><rect x="1050.9" y="1137.6" width="17.4" height="14" fill="#4e4e4e" stroke="#666" stroke-width="0.7"/><circle cx="1071.7" cy="1163" r="3.6" fill="#0710fb"/><path d="M1089.3 1190.3 L1092.0 1193.4 L1094.7 1190.3" fill="none" stroke="#e0e0e0" stroke-width="1"/><rect x="1154.7" y="1132" width="1.4" height="68" fill="#474747"/><rect x="1105.9" y="1137.3" width="44.3" height="44.2" fill="#484848"/><path d="M1149.9 1137.6 V1181.3 H1106.3" fill="none" stroke="#6c6c6c" stroke-width="0.9"/><path d="M1106.2 1181 V1137.6 H1149.6" fill="none" stroke="#5c5c5c" stroke-width="0.6"/><rect x="1106.6" y="1148" width="42.9" height="24" fill="#fff"/><rect x="1106.2" y="1137.6" width="17.4" height="14" fill="#4e4e4e" stroke="#666" stroke-width="0.7"/><circle cx="1127.0" cy="1164.2" r="3.6" fill="#0710fb"/><path d="M1144.6 1190.3 L1147.3 1193.4 L1150.0 1190.3" fill="none" stroke="#e0e0e0" stroke-width="1"/><rect x="1210.0" y="1132" width="1.4" height="68" fill="#474747"/><rect x="1161.2" y="1137.3" width="44.3" height="44.2" fill="#484848"/><path d="M1205.2 1137.6 V1181.3 H1161.6" fill="none" stroke="#6c6c6c" stroke-width="0.9"/><path d="M1161.5 1181 V1137.6 H1204.9" fill="none" stroke="#5c5c5c" stroke-width="0.6"/><rect x="1161.9" y="1148" width="42.9" height="24" fill="#fff"/><rect x="1161.5" y="1137.6" width="17.4" height="14" fill="#4e4e4e" stroke="#666" stroke-width="0.7"/><circle cx="1182.3" cy="1162.5" r="3.6" fill="#0710fb"/><path d="M1199.9 1190.3 L1202.6 1193.4 L1205.3 1190.3" fill="none" stroke="#e0e0e0" stroke-width="1"/><rect x="1265.3" y="1132" width="1.4" height="68" fill="#474747"/><rect x="1216.5" y="1137.3" width="44.3" height="44.2" fill="#484848"/><path d="M1260.5 1137.6 V1181.3 H1216.9" fill="none" stroke="#6c6c6c" stroke-width="0.9"/><path d="M1216.8 1181 V1137.6 H1260.2" fill="none" stroke="#5c5c5c" stroke-width="0.6"/><rect x="1217.2" y="1148" width="42.9" height="24" fill="#fff"/><rect x="1216.8" y="1137.6" width="17.4" height="14" fill="#4e4e4e" stroke="#666" stroke-width="0.7"/><circle cx="1237.6" cy="1164.2" r="3.6" fill="#0710fb"/><path d="M1255.2 1190.3 L1257.9 1193.4 L1260.6 1190.3" fill="none" stroke="#e0e0e0" stroke-width="1"/><rect x="1320.6" y="1132" width="1.4" height="68" fill="#474747"/><rect x="1271.8" y="1137.3" width="44.3" height="44.2" fill="#484848"/><path d="M1315.8 1137.6 V1181.3 H1272.2" fill="none" stroke="#6c6c6c" stroke-width="0.9"/><path d="M1272.1 1181 V1137.6 H1315.5" fill="none" stroke="#5c5c5c" stroke-width="0.6"/><rect x="1272.5" y="1148" width="42.9" height="24" fill="#fff"/><rect x="1272.1" y="1137.6" width="17.4" height="14" fill="#4e4e4e" stroke="#666" stroke-width="0.7"/><circle cx="1292.9" cy="1164.2" r="3.6" fill="#0710fb"/><path d="M1310.5 1190.3 L1313.2 1193.4 L1315.9 1190.3" fill="none" stroke="#e0e0e0" stroke-width="1"/><rect x="1375.9" y="1132" width="1.4" height="68" fill="#474747"/><rect x="1327.1" y="1137.3" width="44.3" height="44.2" fill="#484848"/><path d="M1371.1 1137.6 V1181.3 H1327.5" fill="none" stroke="#6c6c6c" stroke-width="0.9"/><path d="M1327.4 1181 V1137.6 H1370.8" fill="none" stroke="#5c5c5c" stroke-width="0.6"/><rect x="1327.8" y="1148" width="42.9" height="24" fill="#fff"/><rect x="1327.4" y="1137.6" width="17.4" height="14" fill="#4e4e4e" stroke="#666" stroke-width="0.7"/><circle cx="1348.2" cy="1164.2" r="3.6" fill="#0710fb"/><path d="M1365.8 1190.3 L1368.5 1193.4 L1371.2 1190.3" fill="none" stroke="#e0e0e0" stroke-width="1"/><rect x="1431.2" y="1132" width="1.4" height="68" fill="#474747"/><rect x="1382.4" y="1137.3" width="44.3" height="44.2" fill="#484848"/><path d="M1426.4 1137.6 V1181.3 H1382.8" fill="none" stroke="#6c6c6c" stroke-width="0.9"/><path d="M1382.7 1181 V1137.6 H1426.1" fill="none" stroke="#5c5c5c" stroke-width="0.6"/><rect x="1383.1" y="1148" width="42.9" height="24" fill="#fff"/><rect x="1382.7" y="1137.6" width="17.4" height="14" fill="#4e4e4e" stroke="#666" stroke-width="0.7"/><circle cx="1403.5" cy="1164.2" r="3.6" fill="#0710fb"/><path d="M1421.1 1190.3 L1423.8 1193.4 L1426.5 1190.3" fill="none" stroke="#e0e0e0" stroke-width="1"/><rect x="164.6" y="1135.6" width="47" height="47.9" fill="none" stroke="#fff" stroke-width="1.2"/></svg>
<div class="t" style="left:57.00px;top:1138.00px;font-size:12px;color:#fff;transform:scaleX(0.8523);">1</div>
<div class="t" style="left:59.00px;top:1186.00px;font-size:12.3px;color:#f0f0f0;letter-spacing:0.281px;">0 sec.</div>
<div class="t" style="left:112.30px;top:1138.00px;font-size:12px;color:#fff;letter-spacing:-0.188px;">2</div>
<div class="t" style="left:114.30px;top:1186.00px;font-size:12.3px;color:#f0f0f0;letter-spacing:0.281px;">0 sec.</div>
<div class="t" style="left:167.60px;top:1138.00px;font-size:12px;font-weight:700;color:#fff;letter-spacing:-0.188px;">3</div>
<div class="t" style="left:169.60px;top:1186.00px;font-size:12.3px;color:#f0f0f0;letter-spacing:0.281px;">0 sec.</div>
<div class="t" style="left:222.90px;top:1138.00px;font-size:12px;color:#fff;letter-spacing:-0.188px;">4</div>
<div class="t" style="left:224.90px;top:1186.00px;font-size:12.3px;color:#f0f0f0;letter-spacing:0.281px;">0 sec.</div>
<div class="t" style="left:278.20px;top:1138.00px;font-size:12px;color:#fff;letter-spacing:-0.188px;">5</div>
<div class="t" style="left:280.20px;top:1186.00px;font-size:12.3px;color:#f0f0f0;letter-spacing:0.281px;">0 sec.</div>
<div class="t" style="left:333.50px;top:1138.00px;font-size:12px;color:#fff;letter-spacing:-0.188px;">6</div>
<div class="t" style="left:335.50px;top:1186.00px;font-size:12.3px;color:#f0f0f0;letter-spacing:0.281px;">0 sec.</div>
<div class="t" style="left:388.80px;top:1138.00px;font-size:12px;color:#fff;letter-spacing:-0.188px;">7</div>
<div class="t" style="left:390.80px;top:1186.00px;font-size:12.3px;color:#f0f0f0;letter-spacing:0.281px;">0 sec.</div>
<div class="t" style="left:444.10px;top:1138.00px;font-size:12px;color:#fff;letter-spacing:-0.188px;">8</div>
<div class="t" style="left:446.10px;top:1186.00px;font-size:12.3px;color:#f0f0f0;letter-spacing:0.281px;">0 sec.</div>
<div class="t" style="left:499.40px;top:1138.00px;font-size:12px;color:#fff;letter-spacing:-0.188px;">9</div>
<div class="t" style="left:501.40px;top:1186.00px;font-size:12.3px;color:#f0f0f0;letter-spacing:0.281px;">0 sec.</div>
<div class="t" style="left:554.70px;top:1138.00px;font-size:12px;color:#fff;letter-spacing:-0.380px;">10</div>
<div class="t" style="left:556.70px;top:1186.00px;font-size:12.3px;color:#f0f0f0;letter-spacing:0.281px;">0 sec.</div>
<div class="t" style="left:610.00px;top:1138.00px;font-size:12px;color:#fff;letter-spacing:-0.334px;">11</div>
<div class="t" style="left:612.00px;top:1186.00px;font-size:12.3px;color:#f0f0f0;letter-spacing:0.281px;">0 sec.</div>
<div class="t" style="left:665.30px;top:1138.00px;font-size:12px;color:#fff;letter-spacing:-0.380px;">12</div>
<div class="t" style="left:667.30px;top:1186.00px;font-size:12.3px;color:#f0f0f0;letter-spacing:0.281px;">0 sec.</div>
<div class="t" style="left:720.60px;top:1138.00px;font-size:12px;color:#fff;letter-spacing:-0.380px;">13</div>
<div class="t" style="left:722.60px;top:1186.00px;font-size:12.3px;color:#f0f0f0;letter-spacing:0.281px;">0 sec.</div>
<div class="t" style="left:775.90px;top:1138.00px;font-size:12px;color:#fff;letter-spacing:-0.380px;">14</div>
<div class="t" style="left:777.90px;top:1186.00px;font-size:12.3px;color:#f0f0f0;letter-spacing:0.281px;">0 sec.</div>
<div class="t" style="left:831.20px;top:1138.00px;font-size:12px;color:#fff;letter-spacing:-0.380px;">15</div>
<div class="t" style="left:833.20px;top:1186.00px;font-size:12.3px;color:#f0f0f0;letter-spacing:0.281px;">0 sec.</div>
<div class="t" style="left:886.50px;top:1138.00px;font-size:12px;color:#fff;letter-spacing:-0.380px;">16</div>
<div class="t" style="left:888.50px;top:1186.00px;font-size:12.3px;color:#f0f0f0;letter-spacing:0.281px;">0 sec.</div>
<div class="t" style="left:941.80px;top:1138.00px;font-size:12px;color:#fff;letter-spacing:-0.380px;">17</div>
<div class="t" style="left:943.80px;top:1186.00px;font-size:12.3px;color:#f0f0f0;letter-spacing:0.281px;">0 sec.</div>
<div class="t" style="left:997.10px;top:1138.00px;font-size:12px;color:#fff;letter-spacing:-0.380px;">18</div>
<div class="t" style="left:999.10px;top:1186.00px;font-size:12.3px;color:#f0f0f0;letter-spacing:0.281px;">0 sec.</div>
<div class="t" style="left:1052.40px;top:1138.00px;font-size:12px;color:#fff;letter-spacing:-0.380px;">19</div>
<div class="t" style="left:1054.40px;top:1186.00px;font-size:12.3px;color:#f0f0f0;letter-spacing:0.281px;">0 sec.</div>
<div class="t" style="left:1107.70px;top:1138.00px;font-size:12px;color:#fff;letter-spacing:0.020px;">20</div>
<div class="t" style="left:1109.70px;top:1186.00px;font-size:12.3px;color:#f0f0f0;letter-spacing:0.281px;">0 sec.</div>
<div class="t" style="left:1163.00px;top:1138.00px;font-size:12px;color:#fff;letter-spacing:-0.380px;">21</div>
<div class="t" style="left:1165.00px;top:1186.00px;font-size:12.3px;color:#f0f0f0;letter-spacing:0.281px;">0 sec.</div>
<div class="t" style="left:1218.30px;top:1138.00px;font-size:12px;color:#fff;letter-spacing:0.020px;">22</div>
<div class="t" style="left:1220.30px;top:1186.00px;font-size:12.3px;color:#f0f0f0;letter-spacing:0.281px;">0 sec.</div>
<div class="t" style="left:1273.60px;top:1138.00px;font-size:12px;color:#fff;letter-spacing:0.020px;">23</div>
<div class="t" style="left:1275.60px;top:1186.00px;font-size:12.3px;color:#f0f0f0;letter-spacing:0.281px;">0 sec.</div>
<div class="t" style="left:1328.90px;top:1138.00px;font-size:12px;color:#fff;letter-spacing:0.020px;">24</div>
<div class="t" style="left:1330.90px;top:1186.00px;font-size:12.3px;color:#f0f0f0;letter-spacing:0.281px;">0 sec.</div>
<div class="t" style="left:1384.20px;top:1138.00px;font-size:12px;color:#fff;letter-spacing:0.020px;">25</div>
<div class="t" style="left:1386.20px;top:1186.00px;font-size:12.3px;color:#f0f0f0;letter-spacing:0.281px;">0 sec.</div>
<div class="a" style="left:50px;top:1200px;width:1384px;height:1px;background:#3c3c3c;"></div>
<div class="a" style="left:399px;top:1201px;width:1035px;height:30px;background:#4a4a4a;"></div>
<div class="a" style="left:1411px;top:1201px;width:23px;height:30px;background:#535353;"></div>
<div class="a" style="left:83px;top:1201px;width:1.2px;height:30px;background:#414141;"></div>
<div class="a" style="left:163px;top:1201px;width:1.2px;height:30px;background:#414141;"></div>
<div class="a" style="left:297px;top:1201px;width:1.2px;height:30px;background:#414141;"></div>
<div class="a" style="left:398px;top:1201px;width:1.2px;height:30px;background:#414141;"></div>
<svg style="left:0;top:0" width="420" height="1233" viewBox="0 0 420 1233"><g fill="#dcdcdc"><rect x="59.5" y="1211.6" width="4.6" height="2"/><rect x="59.5" y="1215.2" width="4.6" height="2"/><rect x="59.5" y="1218.8" width="4.6" height="2.2"/><rect x="68" y="1211.6" width="6.4" height="2"/><rect x="68" y="1215.2" width="4.8" height="2"/><rect x="68" y="1218.8" width="7.8" height="2.2"/><rect x="65.4" y="1208.4" width="1.5" height="13.6"/><path d="M63.4 1207.8 H68.9 L67.4 1209.6 H64.9 Z"/></g><path d="M152.6 1213.6 H160 L156.3 1219 Z" fill="#dcdcdc"/><rect x="152.8" y="1212.8" width="7" height="0.8" fill="#1c1c1c"/><rect x="174.9" y="1211.4" width="2.1" height="8.6" fill="#dcdcdc"/><path d="M177.6 1215.7 L186.2 1211.2 V1220.2 Z" fill="#dcdcdc"/><path d="M206.3 1215.7 L215.8 1211.2 V1220.2 Z" fill="#dcdcdc"/><rect x="217.2" y="1211.4" width="2.1" height="8.6" fill="#dcdcdc"/><path d="M242.8 1210 L253.6 1215.7 L242.8 1221.4 Z" fill="#dcdcdc"/><rect x="275.9" y="1211.4" width="2.2" height="8.6" fill="#dcdcdc"/><path d="M280.6 1211.2 L289.2 1215.7 L280.6 1220.2 Z" fill="#dcdcdc"/><circle cx="308.6" cy="1211.8" r="1.1" fill="#686868"/><circle cx="310.8" cy="1213.4" r="1.4" fill="#747474"/><circle cx="313.2" cy="1215.1" r="1.6" fill="#8a8a8a"/><circle cx="315.6" cy="1216.8" r="1.8" fill="#a8a8a8"/><circle cx="318.6" cy="1218.8" r="2.2" fill="#d8d8d8"/><circle cx="347.8" cy="1214.7" r="15.3" fill="none" stroke="#03e810" stroke-width="3.7"/><rect x="342.4" y="1209.7" width="11.2" height="11.5" fill="none" stroke="#dcdcdc" stroke-width="1.2"/><path d="M345.2 1215.5 H350.8 M348 1212.7 V1218.3" stroke="#dcdcdc" stroke-width="1.2"/><g fill="none" stroke="#dcdcdc" stroke-width="1.1"><path d="M376.4 1212 L377 1222.4 H385 L385.6 1212"/><path d="M375 1211.6 H387"/><path d="M378.8 1211.4 V1209.4 H383.2 V1211.4"/></g><path d="M379 1213.6 V1221 M381 1213.6 V1221 M383 1213.6 V1221" stroke="#b4b4b4" stroke-width="1.2"/></svg>
<div class="t" style="left:95.00px;top:1210.00px;font-size:12.3px;color:#e8e8e8;letter-spacing:-0.096px;">Forever</div>
<div class="a" style="left:401px;top:1218.3px;width:970px;height:9.4px;background:#696969;border-radius:5px;"></div>
<!-- layers -->
<div class="a" style="left:1437px;top:68px;width:304px;height:11px;background:#424242;"></div>
<div class="a" style="left:1437px;top:79px;width:304px;height:1px;background:#3a3a3a;"></div>
<div class="a" style="left:1437px;top:80px;width:304px;height:27.4px;background:#424242;"></div>
<div class="a" style="left:1437px;top:80px;width:55px;height:28px;background:#535353;"></div>
<div class="a" style="left:1492px;top:107px;width:249px;height:1px;background:#3a3a3a;"></div>
<div class="t" style="left:1445.20px;top:87.00px;font-size:12px;font-weight:700;color:#f2f2f2;letter-spacing:-0.184px;">Layers</div>
<div class="a" style="left:1437px;top:140.6px;width:304px;height:1.3px;background:#404040;"></div>
<div class="a" style="left:1437px;top:171px;width:304px;height:1px;background:#404040;"></div>
<div class="a" style="left:1437px;top:201px;width:304px;height:1px;background:#404040;"></div>
<div class="a" style="left:1437px;top:231px;width:304px;height:971.5px;background:#4d4d4d;"></div>
<div class="a" style="left:1437px;top:1202.3px;width:304px;height:1px;background:#444;"></div>
<div class="a" style="left:1437px;top:231.4px;width:289px;height:125px;background:#535353;"></div>
<div class="a" style="left:1437px;top:231px;width:289px;height:1.2px;background:#494949;"></div>
<div class="a" style="left:1437px;top:273px;width:289px;height:1.2px;background:#494949;"></div>
<div class="a" style="left:1437px;top:314.3px;width:289px;height:1.2px;background:#494949;"></div>
<div class="a" style="left:1437px;top:356px;width:289px;height:1.2px;background:#494949;"></div>
<div class="a" style="left:1467.2px;top:231.4px;width:1px;height:125px;background:#494949;"></div>
<svg style="left:0;top:0" width="1745" height="1233" viewBox="0 0 1745 1233"><path d="M1729.6 71.4 L1732.2 73.8 L1729.6 76.2 M1733.8 71.4 L1736.4 73.8 L1733.8 76.2" fill="none" stroke="#e8e8e8" stroke-width="1.3"/><path d="M1726 90.5 H1736.6 M1726 92.9 H1736.6 M1726 95.3 H1736.6 M1726 97.7 H1736.6" stroke="#d0d0d0" stroke-width="1"/><rect x="1440.8" y="116.5" width="99.4" height="20.6" rx="3" fill="#424242" stroke="#686868" stroke-width="1"/><circle cx="1452.2" cy="126" r="2.9" fill="none" stroke="#f0f0f0" stroke-width="1.5"/><path d="M1454.6 128.4 L1458 131.4" stroke="#f0f0f0" stroke-width="1.9" stroke-linecap="round"/><path d="M1529 126.2 L1532.8 130 L1536.6 126.2" fill="none" stroke="#e6e6e6" stroke-width="1.2"/><rect x="1554.5" y="120.8" width="13.8" height="11.4" fill="none" stroke="#dcdcdc" stroke-width="1.2"/><path d="M1556.6 130.2 L1559.4 125.4 L1561.2 128.2 L1563.4 124.6 L1566.4 130.2 Z" fill="#dcdcdc"/><circle cx="1585.8" cy="126.9" r="6.5" fill="none" stroke="#dcdcdc" stroke-width="1.3"/><path d="M1581.2 131.5 A6.5 6.5 0 0 0 1590.4 122.3 Z" fill="#dcdcdc"/><path d="M1604.4 121.4 H1617 V125 H1615.4 L1615 123.4 H1612.4 V130.6 L1614.4 131 V132.6 H1607 V131 L1609 130.6 V123.4 H1606.4 L1606 125 H1604.4 Z" fill="#dcdcdc"/><rect x="1628.7" y="121.7" width="10.6" height="10.4" fill="none" stroke="#dcdcdc" stroke-width="1.1"/><rect x="1627.2" y="120.2" width="3.0" height="3.0" fill="#535353" stroke="#dcdcdc" stroke-width="0.9"/><rect x="1637.8" y="120.2" width="3.0" height="3.0" fill="#535353" stroke="#dcdcdc" stroke-width="0.9"/><rect x="1627.2" y="130.6" width="3.0" height="3.0" fill="#535353" stroke="#dcdcdc" stroke-width="0.9"/><rect x="1637.8" y="130.6" width="3.0" height="3.0" fill="#535353" stroke="#dcdcdc" stroke-width="0.9"/><path d="M1656.4 126.4 V120.8 H1661 L1664.6 124.4 V134 H1659.8" fill="none" stroke="#dcdcdc" stroke-width="1.2"/><path d="M1661 120.8 V124.4 H1664.6" fill="none" stroke="#dcdcdc" stroke-width="1"/><rect x="1652.4" y="126.4" width="7.4" height="8" fill="#dcdcdc"/><rect x="1679.6" y="118.6" width="8.6" height="17" rx="4.3" fill="#424242" stroke="#6a6a6a" stroke-width="1"/><circle cx="1684" cy="122.4" r="4.1" fill="#e4e4e4"/><rect x="1440.8" y="147" width="134.4" height="19.8" rx="3" fill="#4e4e4e" stroke="#606060" stroke-width="1"/><path d="M1564.6 156.8 L1568.2 160.2 L1571.8 156.8" fill="none" stroke="#6e6e6e" stroke-width="1.1"/><rect x="1629.8" y="147" width="58.4" height="19.8" rx="3" fill="#4e4e4e" stroke="#606060" stroke-width="1"/><path d="M1673.2 147 V166.8" stroke="#606060" stroke-width="1"/><path d="M1677.6 156.6 L1681.2 160 L1684.8 156.6" fill="none" stroke="#6e6e6e" stroke-width="1.1"/><rect x="1629.8" y="207" width="58.4" height="19.8" rx="3" fill="#4e4e4e" stroke="#606060" stroke-width="1"/><path d="M1673.2 207 V226.8" stroke="#606060" stroke-width="1"/><path d="M1677.6 216.6 L1681.2 220 L1684.8 216.6" fill="none" stroke="#6e6e6e" stroke-width="1.1"/><path d="M1484.6 178.2 L1489.2 182.8 L1487.6 183.6 L1485.2 186.2 L1485 189 L1481.8 186 L1477 190.8 L1476.4 190.2 L1481 185.2 L1478 182 L1480.8 181.8 L1483.4 179.6 Z" fill="#8e8e8e"/><g fill="none" stroke="#8e8e8e" stroke-width="1.1"><path d="M1488.6 191.0 H1486.8 a2.1 2.1 0 0 0 0 4.2 H1488.6"/><path d="M1490.2 191.0 H1492 a2.1 2.1 0 0 1 0 4.2 H1490.2"/><path d="M1487.2 193.1 H1491.6"/></g><path d="M1498.4 184.6 C1501 179.2 1510.6 179.2 1513.2 184.6 C1510.6 190 1501 190 1498.4 184.6 Z" fill="none" stroke="#8e8e8e" stroke-width="1.3"/><circle cx="1505.8" cy="184.2" r="2.3" fill="#8e8e8e"/><g fill="none" stroke="#8e8e8e" stroke-width="1.1"><path d="M1510.6 191.0 H1508.8 a2.1 2.1 0 0 0 0 4.2 H1510.6"/><path d="M1512.2 191.0 H1514 a2.1 2.1 0 0 1 0 4.2 H1512.2"/><path d="M1509.2 193.1 H1513.6"/></g><g fill="none" stroke="#8e8e8e" stroke-width="1.1"><path d="M1532.8 191.0 H1531.0 a2.1 2.1 0 0 0 0 4.2 H1532.8"/><path d="M1534.4 191.0 H1536.2 a2.1 2.1 0 0 1 0 4.2 H1534.4"/><path d="M1531.4 193.1 H1535.8"/></g><rect x="1555.2" y="180.8" width="12" height="11.8" rx="2" fill="#787878"/><path d="M1558 186.8 L1560.4 189.2 L1564.6 184" fill="none" stroke="#515151" stroke-width="1.5"/><rect x="1477.6" y="209.6" width="12.4" height="12.4" fill="none" stroke="#8e8e8e" stroke-width="1.2"/><rect x="1477.6" y="209.6" width="3.1" height="3.1" fill="#8e8e8e"/><rect x="1483.8" y="209.6" width="3.1" height="3.1" fill="#8e8e8e"/><rect x="1480.7" y="212.7" width="3.1" height="3.1" fill="#8e8e8e"/><rect x="1486.9" y="212.7" width="3.1" height="3.1" fill="#8e8e8e"/><rect x="1477.6" y="215.8" width="3.1" height="3.1" fill="#8e8e8e"/><rect x="1483.8" y="215.8" width="3.1" height="3.1" fill="#8e8e8e"/><rect x="1480.7" y="218.9" width="3.1" height="3.1" fill="#8e8e8e"/><rect x="1486.9" y="218.9" width="3.1" height="3.1" fill="#8e8e8e"/><path d="M1498.92 225.62 C1497.59 222.42 1499.00 219.70 1502.25 217.23 L1505.52 220.45 C1505.39 222.22 1502.43 224.98 1498.92 225.62 Z" fill="#8e8e8e"/><path d="M1503.38 216.44 Q1508.94 211.51 1513.65 208.25 L1514.35 208.95 Q1510.28 213.77 1506.29 219.32 Z" fill="#8e8e8e"/><path d="M1528 210.6 V221.4 M1522.6 216 H1533.4" stroke="#8e8e8e" stroke-width="1.3"/><path d="M1528 208 L1530.8 211.4 H1525.2 Z M1528 224 L1530.8 220.6 H1525.2 Z M1520.2 216 L1523.6 213.2 V218.8 Z M1535.8 216 L1532.4 213.2 V218.8 Z" fill="#8e8e8e"/><path d="M1545.6 209.2 V224.6 M1542 212.8 H1552.6 L1555.6 215.8 V224.6 M1542.4 221.4 H1559 M1555.6 209.4 V211.4 M1557.4 212.8 H1559" fill="none" stroke="#8e8e8e" stroke-width="1.2"/><rect x="1566.4" y="215" width="12.4" height="8.6" rx="1" fill="#8e8e8e"/><path d="M1569 215 V212.8 A3.6 3.6 0 0 1 1576.2 212.8 V215" fill="none" stroke="#8e8e8e" stroke-width="1.5"/><rect x="1571.6" y="217.8" width="2" height="2.6" fill="#535353"/><path d="M1445.8 253.6 C1448.3 248.2 1456.7 248.2 1459.2 253.6 C1456.7 259.0 1448.3 259.0 1445.8 253.6 Z" fill="#dcdcdc"/><circle cx="1452.5" cy="253.29999999999998" r="2.7" fill="#4a4a4a"/><circle cx="1453.4" cy="252.4" r="0.9" fill="#dcdcdc"/><path d="M1445.8 295.4 C1448.3 290.0 1456.7 290.0 1459.2 295.4 C1456.7 300.79999999999995 1448.3 300.79999999999995 1445.8 295.4 Z" fill="#dcdcdc"/><circle cx="1452.5" cy="295.09999999999997" r="2.7" fill="#4a4a4a"/><circle cx="1453.4" cy="294.2" r="0.9" fill="#dcdcdc"/><path d="M1445.8 336.6 C1448.3 331.20000000000005 1456.7 331.20000000000005 1459.2 336.6 C1456.7 342.0 1448.3 342.0 1445.8 336.6 Z" fill="#dcdcdc"/><circle cx="1452.5" cy="336.3" r="2.7" fill="#4a4a4a"/><circle cx="1453.4" cy="335.40000000000003" r="0.9" fill="#dcdcdc"/><rect x="1471.3" y="237.2" width="32.4" height="32.4" fill="#fff" stroke="#2c2c2c" stroke-width="0.9"/><rect x="1471.80" y="237.70" width="3.94" height="3.94" fill="#d4d4d4"/><rect x="1479.68" y="237.70" width="3.94" height="3.94" fill="#d4d4d4"/><rect x="1487.56" y="237.70" width="3.94" height="3.94" fill="#d4d4d4"/><rect x="1495.44" y="237.70" width="3.94" height="3.94" fill="#d4d4d4"/><rect x="1475.74" y="241.64" width="3.94" height="3.94" fill="#d4d4d4"/><rect x="1483.62" y="241.64" width="3.94" height="3.94" fill="#d4d4d4"/><rect x="1491.50" y="241.64" width="3.94" height="3.94" fill="#d4d4d4"/><rect x="1499.38" y="241.64" width="3.94" height="3.94" fill="#d4d4d4"/><rect x="1471.80" y="245.58" width="3.94" height="3.94" fill="#d4d4d4"/><rect x="1479.68" y="245.58" width="3.94" height="3.94" fill="#d4d4d4"/><rect x="1487.56" y="245.58" width="3.94" height="3.94" fill="#d4d4d4"/><rect x="1495.44" y="245.58" width="3.94" height="3.94" fill="#d4d4d4"/><rect x="1475.74" y="249.52" width="3.94" height="3.94" fill="#d4d4d4"/><rect x="1483.62" y="249.52" width="3.94" height="3.94" fill="#d4d4d4"/><rect x="1491.50" y="249.52" width="3.94" height="3.94" fill="#d4d4d4"/><rect x="1499.38" y="249.52" width="3.94" height="3.94" fill="#d4d4d4"/><rect x="1471.80" y="253.46" width="3.94" height="3.94" fill="#d4d4d4"/><rect x="1479.68" y="253.46" width="3.94" height="3.94" fill="#d4d4d4"/><rect x="1487.56" y="253.46" width="3.94" height="3.94" fill="#d4d4d4"/><rect x="1495.44" y="253.46" width="3.94" height="3.94" fill="#d4d4d4"/><rect x="1475.74" y="257.40" width="3.94" height="3.94" fill="#d4d4d4"/><rect x="1483.62" y="257.40" width="3.94" height="3.94" fill="#d4d4d4"/><rect x="1491.50" y="257.40" width="3.94" height="3.94" fill="#d4d4d4"/><rect x="1499.38" y="257.40" width="3.94" height="3.94" fill="#d4d4d4"/><rect x="1471.80" y="261.34" width="3.94" height="3.94" fill="#d4d4d4"/><rect x="1479.68" y="261.34" width="3.94" height="3.94" fill="#d4d4d4"/><rect x="1487.56" y="261.34" width="3.94" height="3.94" fill="#d4d4d4"/><rect x="1495.44" y="261.34" width="3.94" height="3.94" fill="#d4d4d4"/><rect x="1475.74" y="265.28" width="3.94" height="3.94" fill="#d4d4d4"/><rect x="1483.62" y="265.28" width="3.94" height="3.94" fill="#d4d4d4"/><rect x="1491.50" y="265.28" width="3.94" height="3.94" fill="#d4d4d4"/><rect x="1499.38" y="265.28" width="3.94" height="3.94" fill="#d4d4d4"/><clipPath id="cpt"><rect x="1471.8" y="237.7" width="31.4" height="31.4"/></clipPath><circle cx="1487.2" cy="254" r="14.7" fill="#0710fb" stroke="#000" stroke-width="0.5" clip-path="url(#cpt)"/><rect x="1489.2" y="255.3" width="14.8" height="14.8" fill="#535353" stroke="#3c3c3c" stroke-width="0.8"/><rect x="1492.5" y="258.9" width="8.0" height="7.6" fill="none" stroke="#e6e6e6" stroke-width="1.1"/><rect x="1491.0" y="257.4" width="3.0" height="3.0" fill="#535353" stroke="#e6e6e6" stroke-width="0.9"/><rect x="1499.0" y="257.4" width="3.0" height="3.0" fill="#535353" stroke="#e6e6e6" stroke-width="0.9"/><rect x="1491.0" y="265.0" width="3.0" height="3.0" fill="#535353" stroke="#e6e6e6" stroke-width="0.9"/><rect x="1499.0" y="265.0" width="3.0" height="3.0" fill="#535353" stroke="#e6e6e6" stroke-width="0.9"/><rect x="1471.3" y="293.3" width="16.6" height="2" fill="#000"/><rect x="1487.6" y="287.4" width="15.6" height="15" rx="1.5" fill="#484848" stroke="#444" stroke-width="0.6"/><rect x="1491.5" y="290.9" width="8.0" height="7.4" fill="none" stroke="#e6e6e6" stroke-width="1.1"/><rect x="1490.0" y="289.4" width="3.0" height="3.0" fill="#535353" stroke="#e6e6e6" stroke-width="0.9"/><rect x="1498.0" y="289.4" width="3.0" height="3.0" fill="#535353" stroke="#e6e6e6" stroke-width="0.9"/><rect x="1490.0" y="296.79999999999995" width="3.0" height="3.0" fill="#535353" stroke="#e6e6e6" stroke-width="0.9"/><rect x="1498.0" y="296.79999999999995" width="3.0" height="3.0" fill="#535353" stroke="#e6e6e6" stroke-width="0.9"/><rect x="1471.3" y="326.6" width="31.4" height="17.8" fill="#fff" stroke="#2c2c2c" stroke-width="0.9"/><rect x="1699.6" y="334.8" width="8.8" height="6.8" fill="#4a4a4a" stroke="#e2e2e2" stroke-width="1.2"/><path d="M1701.6 334.4 V332.4 A2.4 2.4 0 0 1 1706.4 332.4 V334.4" fill="none" stroke="#e2e2e2" stroke-width="1.2"/><circle cx="1704" cy="338.4" r="0.9" fill="#e2e2e2"/><g fill="none" stroke="#8e8e8e" stroke-width="1.4"><path d="M1513.2 1213.3 H1510.6 a3.25 3.25 0 0 0 0 6.5 H1513.2"/><path d="M1515.6 1213.3 H1518.2 a3.25 3.25 0 0 1 0 6.5 H1515.6"/><path d="M1510.8 1216.55 H1518"/></g><path d="M1555.2 1224.6 H1558 L1556.6 1226 Z" fill="#6e6e6e"/><rect x="1568.4" y="1210" width="14.6" height="11.8" fill="#8e8e8e"/><ellipse cx="1576" cy="1215.8" rx="3.4" ry="2.9" fill="#535353"/><circle cx="1608.9" cy="1216.5" r="5.9" fill="none" stroke="#dcdcdc" stroke-width="1.2"/><path d="M1604.7 1220.7 A5.9 5.9 0 0 0 1613.1 1212.3 Z" fill="#dcdcdc"/><path d="M1616.2 1224.8 H1619.8 L1618 1226.6 Z" fill="#f0f0f0"/><path d="M1632.6 1210.2 H1638 L1639 1212 H1646.2 V1221.8 H1632.6 Z" fill="#dcdcdc"/><rect x="1632.6" y="1211.4" width="13.6" height="0.8" fill="#535353"/><rect x="1665.4" y="1210.6" width="11.4" height="11.8" fill="none" stroke="#dcdcdc" stroke-width="1.2"/><path d="M1668.2 1216.5 H1674 M1671.1 1213.6 V1219.4" stroke="#dcdcdc" stroke-width="1.3"/><g fill="none" stroke="#8e8e8e" stroke-width="1.1"><path d="M1697.6 1213 L1698.2 1223.4 H1706 L1706.6 1213"/><path d="M1696.2 1212.6 H1708"/><path d="M1700 1212.4 V1210.4 H1704.2 V1212.4"/></g><path d="M1700.2 1214.6 V1222 M1702.1 1214.6 V1222 M1704 1214.6 V1222" stroke="#8e8e8e" stroke-width="1"/></svg>
<div class="t" style="left:1462.30px;top:122.00px;font-size:12.5px;color:#f2f2f2;letter-spacing:-0.258px;">Kind</div>
<div class="t" style="left:1448.40px;top:152.00px;font-size:12.5px;color:#8c8c8c;letter-spacing:-0.066px;">Normal</div>
<div class="t" style="left:1579.90px;top:152.00px;font-size:12.5px;color:#999;letter-spacing:-0.032px;">Opacity:</div>
<div class="t" style="left:1633.30px;top:152.00px;font-size:12.5px;color:#787878;letter-spacing:-0.446px;">100%</div>
<div class="t" style="left:1441.40px;top:181.00px;font-size:12.5px;color:#8e8e8e;letter-spacing:0.041px;">Unify:</div>
<div class="t" style="left:1521.00px;top:178.00px;font-size:15px;font-style:italic;color:#8e8e8e;letter-spacing:-0.086px;">fx</div>
<div class="t" style="left:1577.60px;top:181.00px;font-size:12.5px;color:#8e8e8e;letter-spacing:-0.194px;">Propagate Frame 1</div>
<div class="t" style="left:1442.50px;top:211.00px;font-size:12.5px;color:#8e8e8e;letter-spacing:-0.098px;">Lock:</div>
<div class="t" style="left:1607.40px;top:211.00px;font-size:12.5px;color:#999;letter-spacing:-0.271px;">Fill:</div>
<div class="t" style="left:1633.30px;top:212.00px;font-size:12.5px;color:#787878;letter-spacing:-0.446px;">100%</div>
<div class="t" style="left:1512.60px;top:247.00px;font-size:12.3px;color:#f2f2f2;letter-spacing:-0.209px;">Ellipse 1</div>
<div class="t" style="left:1511.50px;top:289.00px;font-size:12.3px;color:#f2f2f2;letter-spacing:-0.336px;">Line 1</div>
<div class="t" style="left:1511.50px;top:330.00px;font-size:12.3px;color:#f2f2f2;letter-spacing:0.066px;">Background</div>
<div class="t" style="left:1539.80px;top:1207.00px;font-size:17px;font-style:italic;color:#989898;letter-spacing:-0.367px;">fx</div>
</div>
</body>
</html>
